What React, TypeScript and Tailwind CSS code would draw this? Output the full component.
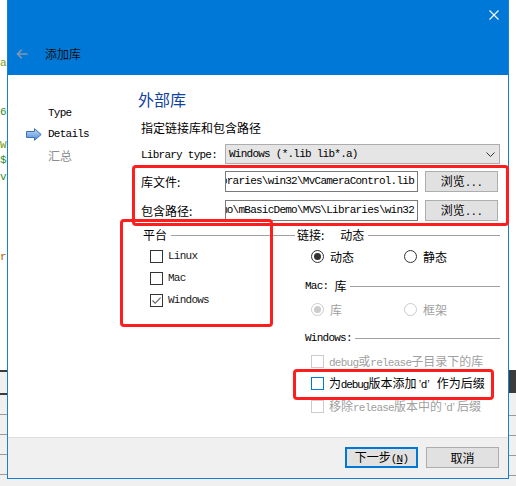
import React from "react";

const mono = "font-['Liberation_Mono',monospace] text-[11px] tracking-[-0.75px]";
const sansLatin = "font-['Liberation_Sans',sans-serif] text-[11px]";

function M({ children, className = "" }: { children: React.ReactNode; className?: string }) {
  return <span className={`${mono} ${className}`}>{children}</span>;
}

function CheckBox({ state = "normal", checked = false }: { state?: "normal" | "disabled" | "focus"; checked?: boolean }) {
  const border =
    state === "disabled" ? "border-[#cccccc]" : state === "focus" ? "border-[#0078d7]" : "border-[#333333]";
  return (
    <span className={`flex h-[13px] w-[13px] shrink-0 items-center justify-center border bg-white ${border}`}>
      {checked && (
        <svg width="11" height="11" viewBox="0 0 11 11">
          <path d="M1.5 5.5 L4.2 8.3 L9.6 2.6" fill="none" stroke="#5a5a5a" strokeWidth="1.1" />
        </svg>
      )}
    </span>
  );
}

function Radio({ checked = false, disabled = false }: { checked?: boolean; disabled?: boolean }) {
  return (
    <span
      className={`flex h-[13px] w-[13px] shrink-0 items-center justify-center rounded-full border bg-white ${
        disabled ? "border-[#cccccc]" : "border-[#333333]"
      }`}
    >
      {checked && <span className={`h-[7px] w-[7px] rounded-full ${disabled ? "bg-[#cccccc]" : "bg-[#333333]"}`} />}
    </span>
  );
}

function GroupLine({ className = "" }: { className?: string }) {
  return <span className={`h-px flex-1 bg-[#a0a0a0] ${className}`} />;
}

function Button({ children, primary = false }: { children: React.ReactNode; primary?: boolean }) {
  return (
    <button
      className={`flex h-[21px] w-[73px] items-center justify-center bg-[#e1e1e1] leading-[14px] ${
        primary ? "border-2 border-[#0078d7]" : "border border-[#adadad]"
      }`}
    >
      <span className="whitespace-nowrap">{children}</span>
    </button>
  );
}

function PathField({ value }: { value: string }) {
  return (
    <div className="flex h-[21px] w-[193px] items-center justify-end overflow-hidden whitespace-nowrap border border-[#7a7a7a] bg-white pr-[3px]">
      <M className="shrink-0 leading-[15px]">{value}</M>
    </div>
  );
}

function EditorEdges() {
  return (
    <>
      <div className="absolute left-0 top-0 h-[370px] w-full bg-white" />
      {/* text of the editor peeking out on the left */}
      <div className="absolute left-0 top-0 h-[370px] w-[7px] overflow-hidden font-['Liberation_Mono',monospace] text-[11px] leading-[10px]">
        <span className="absolute left-0 top-[58px] text-[#7a9a10]">a</span>
        <span className="absolute left-0 top-[107px] text-[#2f8a2f]">6</span>
        <span className="absolute left-0 top-[140px] text-[#6f9a10]">W</span>
        <span className="absolute left-0 top-[155px] text-[#2f8a2f]">$</span>
        <span className="absolute left-0 top-[172px] text-[#2f8a2f]">v</span>
        <span className="absolute left-0 top-[252px] text-[#b05a00]">r</span>
      </div>
      <div className="absolute left-0 top-[370px] h-[2px] w-[7px] bg-[#3c3c3c]" />
      <div className="absolute left-0 top-[393px] h-[2px] w-[7px] bg-[#3c3c3c]" />
      <div className="absolute left-0 top-[414px] h-px w-[7px] bg-[#9a9a9a]" />
      <div className="absolute left-0 top-[434px] h-px w-[7px] bg-[#9a9a9a]" />
      <div className="absolute left-0 top-[454px] h-px w-[7px] bg-[#9a9a9a]" />
      <div className="absolute left-0 top-[474px] h-px w-[7px] bg-[#9a9a9a]" />
      <div className="absolute right-0 top-[370px] h-[23px] w-[8px] bg-[#3c3c3c]" />
      <div className="absolute right-0 top-[415px] h-px w-[8px] bg-[#9a9a9a]" />
      <div className="absolute right-0 top-[435px] h-px w-[8px] bg-[#9a9a9a]" />
      <div className="absolute right-0 top-[455px] h-px w-[8px] bg-[#9a9a9a]" />
      <div className="absolute right-0 top-[475px] h-px w-[8px] bg-[#9a9a9a]" />
    </>
  );
}

function Header() {
  return (
    <div className="flex h-[75px] shrink-0 flex-col bg-[#0078d7]">
      <div className="flex h-[44px] justify-end pr-[9px] pt-[10px]">
        <svg width="10" height="10" viewBox="0 0 10 10">
          <path d="M0.5 0.5 L9.5 9.5 M9.5 0.5 L0.5 9.5" stroke="#ffffff" strokeWidth="1.1" />
        </svg>
      </div>
      <div className="flex h-[20px] items-center pl-[8px]">
        <svg width="12" height="10" viewBox="0 0 12 10">
          <path d="M11.5 5 H1.5 M5.8 0.8 L1.5 5 L5.8 9.2" fill="none" stroke="#8397ae" strokeWidth="1.6" />
        </svg>
        <span className="ml-[17px] text-[12px] leading-[16px] text-[#111]">添加库</span>
      </div>
    </div>
  );
}

function Nav() {
  return (
    <div className="flex w-[130px] shrink-0 flex-col pt-[28px]">
      <div className="flex h-[21px] items-center pl-[40px]">
        <M>Type</M>
      </div>
      <div className="flex h-[21px] items-center">
        <span className="flex w-[40px] justify-start pl-[18px]">
          <svg width="16" height="13" viewBox="0 0 16 13">
            <defs>
              <linearGradient id="navArrow" x1="0" y1="0" x2="0" y2="1">
                <stop offset="0" stopColor="#c4ddf8" />
                <stop offset="1" stopColor="#4b8cd4" />
              </linearGradient>
            </defs>
            <path d="M0.5 3.5 H8.5 V0.7 L15.2 6.5 L8.5 12.3 V9.5 H0.5 Z" fill="url(#navArrow)" stroke="#3b72b9" strokeWidth="1" />
          </svg>
        </span>
        <M>Details</M>
      </div>
      <div className="flex h-[21px] items-center pl-[40px] text-[12px] text-[#8c8c8c]">汇总</div>
    </div>
  );
}

function Content() {
  return (
    <div className="flex flex-1 flex-col pr-[8px]">
      <div className="mt-[13px] h-[22px] text-[16px] leading-[22px] text-[#10429c]">外部库</div>
      <div className="ml-[3px] mt-[10px] h-[16px] text-[12px] leading-[16px]">指定链接库和包含路径</div>

      <div className="mt-[8px] flex h-[20px] items-center">
        <div className="ml-[3px] w-[84px]">
          <M>Library type:</M>
        </div>
        <div className="flex h-[20px] flex-1 items-center justify-between border border-[#adadad] bg-[#e5e5e5] pl-[3px] pr-[4px]">
          <M className="leading-[15px]">Windows (*.lib lib*.a)</M>
          <svg width="9" height="5" viewBox="0 0 9 5">
            <path d="M0.5 0.5 L4.5 4.5 L8.5 0.5" fill="none" stroke="#333" strokeWidth="1" />
          </svg>
        </div>
      </div>

      <div className="mt-[7px] flex h-[21px] items-center">
        <div className="ml-[3px] w-[84px] text-[12px] leading-[16px]">库文件:</div>
        <PathField value={"C:\\Program Files (x86)\\MVS\\Development\\Libraries\\win32\\MvCameraControl.lib"} />
        <div className="ml-[7px]">
          <Button>
            浏览<M>...</M>
          </Button>
        </div>
      </div>

      <div className="mt-[8px] flex h-[21px] items-center">
        <div className="ml-[3px] w-[84px] text-[12px] leading-[16px]">包含路径:</div>
        <PathField value={"D:\\Projects\\QtCamDemo\\mBasicDemo\\MVS\\Libraries\\win32"} />
        <div className="ml-[7px]">
          <Button>
            浏览<M>...</M>
          </Button>
        </div>
      </div>

      <div className="mt-[6px] flex">
        {/* platform group */}
        <div className="flex w-[157px] flex-col">
          <div className="flex h-[16px] items-center">
            <span className="ml-[5px] text-[12px] leading-[16px]">平台</span>
            <GroupLine className="ml-[4px]" />
          </div>
          {["Linux", "Mac", "Windows"].map((name, i) => (
            <div key={name} className={`ml-[12px] flex h-[13px] items-center ${i === 0 ? "mt-[7px]" : "mt-[9px]"}`}>
              <CheckBox checked={name === "Windows"} />
              <M className="ml-[5px] leading-[13px] text-[#1a1a1a]">{name}</M>
            </div>
          ))}
        </div>

        {/* linking group */}
        <div className="ml-[2px] flex flex-1 flex-col">
          <div className="flex h-[16px] items-center text-[12px] leading-[16px]">
            <span>链接:</span>
            <span className="ml-[16px]">动态</span>
            <GroupLine className="ml-[4px]" />
          </div>
          <div className="mt-[7px] flex h-[13px] items-center pl-[14px] text-[12px]">
            <span className="flex w-[93px] items-center">
              <Radio checked />
              <span className="ml-[6px] leading-[13px]">动态</span>
            </span>
            <span className="flex items-center">
              <Radio />
              <span className="ml-[6px] leading-[13px]">静态</span>
            </span>
          </div>

          <div className="mt-[15px] flex h-[16px] items-center pl-[8px] text-[12px] leading-[16px]">
            <M>Mac:</M>
            <span className="ml-[6px]">库</span>
            <GroupLine className="ml-[4px]" />
          </div>
          <div className="mt-[9px] flex h-[13px] items-center pl-[14px] text-[12px] text-[#a0a0a0]">
            <span className="flex w-[93px] items-center">
              <Radio checked disabled />
              <span className="ml-[6px] leading-[13px]">库</span>
            </span>
            <span className="flex items-center">
              <Radio disabled />
              <span className="ml-[6px] leading-[13px]">框架</span>
            </span>
          </div>

          <div className="mt-[14px] flex h-[16px] items-center pl-[8px] text-[12px] leading-[16px]">
            <M>Windows:</M>
            <GroupLine className="ml-[3px]" />
          </div>
          <div className="mt-[9px] flex h-[13px] items-center pl-[14px] text-[12px] leading-[13px] text-[#a0a0a0]">
            <CheckBox state="disabled" />
            <span className="ml-[5px] whitespace-nowrap leading-[13px]">
              <M>debug</M>或<M>release</M>子目录下的库
            </span>
          </div>
          <div className="mt-[9px] flex h-[13px] items-center pl-[14px] text-[12px] leading-[13px]">
            <CheckBox state="focus" />
            <span className="ml-[5px] whitespace-nowrap leading-[13px]">
              为<span className={`${sansLatin} tracking-[-0.6px]`}>debug</span>版本添加
              <span className={`${sansLatin} ml-[2px] mr-[7px]`}>’d’</span>作为后缀
            </span>
          </div>
          <div className="mt-[10px] flex h-[13px] items-center pl-[14px] text-[12px] leading-[13px] text-[#a0a0a0]">
            <CheckBox state="disabled" />
            <span className="ml-[5px] whitespace-nowrap leading-[13px]">
              移除<M>release</M>版本中的<span className={`${sansLatin} mx-[2px]`}>’d’</span>后缀
            </span>
          </div>
        </div>
      </div>
    </div>
  );
}

function Footer() {
  return (
    <div className="flex h-[41px] shrink-0 items-start justify-end gap-[8px] border-t border-[#dfdfdf] bg-[#f0f0f0] pr-[9px] pt-[9px] text-[12px]">
      <Button primary>
        下一步<M>(</M>
        <M className="underline">N</M>
        <M>)</M>
      </Button>
      <Button>取消</Button>
    </div>
  );
}

export default function App() {
  return (
    <div className="relative h-[486px] w-[516px] overflow-hidden bg-[#f0f0f0] font-['Noto_Sans_CJK_SC',sans-serif] text-[12px] text-black">
      <EditorEdges />

      <div className="absolute left-[7px] top-0 flex h-[479px] w-[502px] flex-col border-x border-b border-[#1a7fd4] bg-white">
        <Header />
        <div className="flex h-[362px] shrink-0">
          <Nav />
          <Content />
        </div>
        <Footer />
      </div>

      {/* red markup boxes drawn over the dialog */}
      <div className="pointer-events-none absolute left-[132px] top-[165px] h-[61px] w-[377px] rounded-[4px] border-[3px] border-[#ff1e1e]" />
      <div className="pointer-events-none absolute left-[120px] top-[219px] h-[108px] w-[153px] rounded-[4px] border-[3px] border-[#ff1e1e]" />
      <div className="pointer-events-none absolute left-[293px] top-[369px] h-[31px] w-[201px] rounded-[4px] border-[3px] border-[#ff1e1e]" />
    </div>
  );
}
